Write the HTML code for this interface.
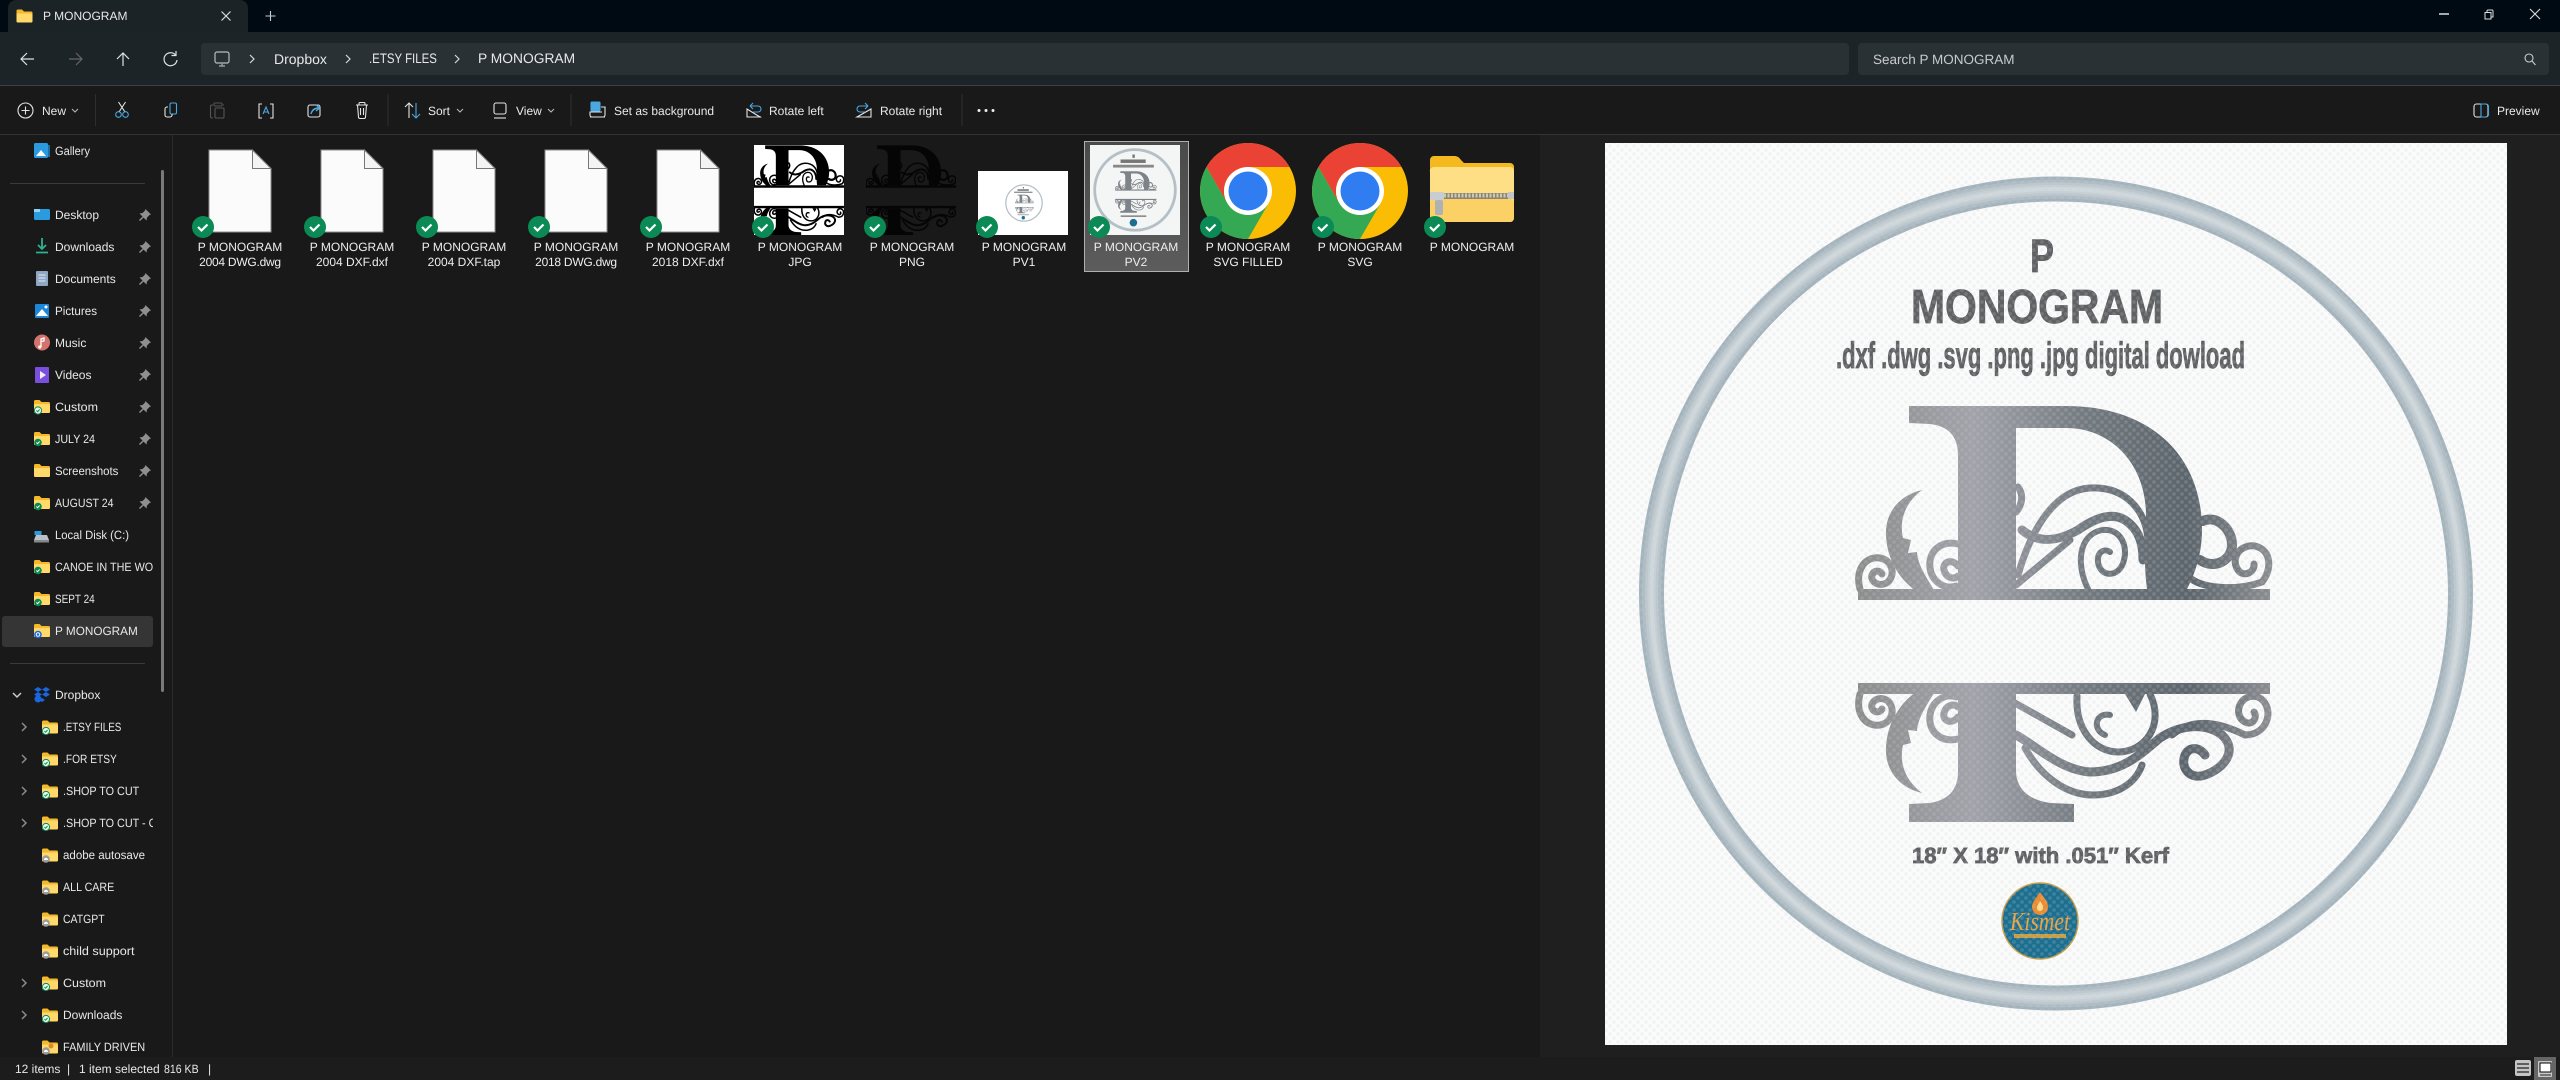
<!DOCTYPE html>
<html><head><meta charset="utf-8"><title>P MONOGRAM</title>
<style>
html,body{margin:0;padding:0;width:2560px;height:1080px;overflow:hidden;background:#191919}
body{position:relative;font-family:"Liberation Sans",sans-serif;font-size:12px;color:#e8e8e8;text-rendering:geometricPrecision}
.b{position:absolute}
.t{position:absolute;line-height:16px;height:16px;white-space:nowrap;overflow:hidden;width:98px;transform-origin:0 50%}
.s{left:55px}.c{left:63px;width:90px}
.tb{position:absolute;top:103px;line-height:16px;white-space:nowrap}
.l{position:absolute;top:239.500px;width:110px;text-align:center;line-height:15.3px;color:#eee}
.n{letter-spacing:-.25px}
svg{position:absolute;left:0;top:0}
</style></head><body>
<div class="b" style="left:0;top:0;width:2560px;height:32px;background:#000a12"></div>
<div class="b" style="left:8px;top:0;width:240px;height:32px;background:#1c2327;border-radius:8px 8px 0 0"></div>
<div class="b" style="left:0;top:32px;width:2560px;height:53px;background:#1d2428"></div>
<div class="b" style="left:0;top:85px;width:2560px;height:1px;background:#3c3f41"></div>
<div class="b" style="left:201px;top:43px;width:1648px;height:32px;background:#2a3135;border-radius:4px"></div>
<div class="b" style="left:1858px;top:43px;width:691px;height:32px;background:#2a3135;border-radius:4px"></div>
<div class="b" style="left:0;top:134px;width:2560px;height:1px;background:#333"></div>
<div class="b" style="left:1540px;top:135px;width:1020px;height:922px;background:#1f1f1f"></div>
<div class="b" style="left:172px;top:135px;width:1px;height:922px;background:#2b2b2b"></div>
<div class="b" style="left:161px;top:170px;width:3px;height:522px;background:#7a7a7a;border-radius:2px"></div>
<div class="b" style="left:10px;top:183px;width:135px;height:1px;background:#3a3a3a"></div>
<div class="b" style="left:10px;top:663px;width:135px;height:1px;background:#3a3a3a"></div>
<div class="b" style="left:2px;top:616px;width:151px;height:31px;background:#353535;border-radius:3px"></div>
<div class="b" style="left:1084px;top:141px;width:103px;height:129px;background:linear-gradient(#4a4a4a,#5c5c5c);border:1px solid #b0b0b0"></div>
<div class="b" style="left:0;top:1057px;width:2560px;height:23px;background:#1c1c1c"></div>
<div class="b" style="left:1605px;top:143px;width:902px;height:902px;background:#fbfbfb"></div>
<div class="b" style="left:754px;top:145px;width:90px;height:90px;background:#fff"></div>
<div class="b" style="left:978px;top:171px;width:90px;height:64px;background:#fff"></div>
<div class="b" style="left:1090px;top:145px;width:90px;height:90px;background:#f4f5f5"></div>

<svg width="2560" height="1080" viewBox="0 0 2560 1080" xmlns="http://www.w3.org/2000/svg">
<defs>
<linearGradient id="g" gradientUnits="userSpaceOnUse" x1="1858" y1="0" x2="2270" y2="0">
<stop offset="0" stop-color="#8d8d8d"/><stop offset=".28" stop-color="#a2a3aa"/><stop offset=".55" stop-color="#737a80"/><stop offset=".8" stop-color="#5c656c"/><stop offset="1" stop-color="#8a8d90"/></linearGradient>
<pattern id="dots" width="8" height="8" patternUnits="userSpaceOnUse"><circle cx="2" cy="2" r="1.9" fill="#c6cbd0" fill-opacity=".2"/><circle cx="6" cy="6" r="1.9" fill="#c6cbd0" fill-opacity=".2"/></pattern>
<g id="ol">
<path stroke="none" d="M1922 490C1900 495 1885 512 1886 535C1887 560 1900 582 1922 595L1934 590C1925 575 1918 565 1917 552L1908 553L1911 540L1903 538C1899 520 1905 503 1922 490Z"/>
<g fill="none" stroke-width="7" stroke-linecap="round">
<path d="M1860 589C1855 570 1865 556 1880 558C1892 560 1896 574 1888 582C1880 588 1870 582 1872 575C1874 570 1880 570 1882 574"/>
<path d="M1958 544C1940 540 1928 552 1930 568C1932 582 1945 590 1956 586M1958 566C1952 558 1942 562 1944 570C1946 578 1954 580 1958 576"/>
</g></g>
<g id="mono">
<path stroke="none" d="M1909 406H2066C2150 406 2202 455 2202 530C2202 552 2196 572 2187 589H2147C2143 560 2146 535 2146 515C2146 465 2112 428 2066 428H2016V589H1958V455C1958 436 1948 426 1930 424L1909 423Z"/>
<path stroke="none" d="M1858 589H2270V600H1858ZM1858 683H2270V694H1858Z"/>
<path stroke="none" d="M1958 694H2016V770C2016 790 2030 800 2050 803L2074 804V822H1909V804L1930 803C1948 800 1958 790 1958 772Z"/>
<use href="#ol"/><use href="#ol" transform="matrix(1 0 0 -1 0 1283)"/>
<g fill="none" stroke-width="7" stroke-linecap="round">
<path d="M2018 487C2024 495 2022 505 2016 512"/>
<path d="M2018 575C2028 540 2050 490 2090 488C2125 486 2146 510 2148 540"/>
<path stroke-width="9" d="M2022 530C2040 545 2060 540 2078 530C2095 518 2112 512 2125 520C2140 530 2143 545 2143 560"/>
<path d="M2016 585L2070 540"/>
<path stroke-width="6" d="M2088 589C2076 565 2078 535 2102 530C2120 528 2128 545 2124 560C2120 578 2100 578 2098 562C2097 552 2104 548 2110 552"/>
<path stroke-width="10" d="M2203 521C2216 515 2232 528 2232 545C2232 560 2215 570 2200 560"/>
<path d="M2190 578C2205 590 2240 590 2262 582C2272 570 2272 550 2255 546C2240 544 2230 558 2238 570C2244 578 2255 572 2254 564"/>
<path stroke-width="9" d="M2016 735C2035 745 2060 770 2090 772C2125 772 2145 750 2160 738C2180 725 2205 722 2222 735C2238 750 2225 768 2205 775C2190 780 2180 768 2185 755C2190 745 2200 748 2205 755"/>
<path d="M2015 703L2072 735"/>
<path d="M2025 748C2040 775 2065 795 2093 795C2115 795 2135 785 2142 765"/>
<path d="M2077 696C2075 730 2095 752 2118 752C2145 752 2165 725 2150 694"/>
<path stroke-width="6" d="M2110 715C2095 712 2092 730 2105 735"/>
<path d="M2172 735C2195 715 2225 725 2245 735C2270 735 2275 705 2258 697C2240 692 2232 715 2245 722C2252 726 2258 718 2254 712"/>
</g>
<path stroke="none" d="M2125 694H2145L2136 712Z"/>
</g>
<g id="pv">
<circle cx="2056" cy="593.5" r="404" fill="none" stroke="#b5c0c6" stroke-width="28"/>
<use href="#mono" fill="#7d8388" stroke="#7d8388"/>
<rect x="2030" y="238" width="24" height="34" fill="#777"/>
<rect x="1911" y="288" width="252" height="35" fill="#777"/>
<rect x="1836" y="341" width="409" height="28" fill="#888"/>
<rect x="1912" y="848" width="257" height="16" fill="#888"/>
<circle cx="2040" cy="921" r="38" fill="#1e6f8f"/>
</g>
<g id="file"><path d="M209 150H252.5L271 168.5V232H209Z" fill="#fbfbfb" stroke="#8d8d8d" stroke-width="1"/><path d="M252.5 150V168.5H271Z" fill="#f4f4f4" stroke="#777" stroke-width="1"/></g>
<g id="chk"><circle r="11" fill="#0b8a55"/><path d="M-5 0l3.5 3.5 6-6" fill="none" stroke="#fff" stroke-width="2.2"/></g>
<g id="chrome"><circle r="48" fill="#fbbc04"/>
<path d="M0-48A48 48 0 0 1 41.57-24H0A24 24 0 0 0-20.8 12L-41.57-24A48 48 0 0 1 0-48Z" fill="#ea4335"/>
<path d="M-41.57-24L-20.8 12A24 24 0 0 0 20.8 12L0 48A48 48 0 0 1-41.57-24Z" fill="#34a853"/>
<circle r="24" fill="#fff"/><circle r="19.5" fill="#2f7df0"/><circle r="21.5" fill="none" stroke="#fff" stroke-width="1"/></g>
<g id="fo"><path d="M0 2A1.5 1.5 0 0 1 1.5 .5H5.5L7.5 2.5H14.5A1.5 1.5 0 0 1 16 4V12A1.5 1.5 0 0 1 14.5 13.5H1.5A1.5 1.5 0 0 1 0 12Z" fill="#f5b82b"/><path d="M0 4.5H14.5A1.5 1.5 0 0 1 16 6V12A1.5 1.5 0 0 1 14.5 13.5H1.5A1.5 1.5 0 0 1 0 12Z" fill="#ffd969"/></g>
<g id="bg"><circle cx="4" cy="11" r="3.8" fill="#0c8a50"/><path d="M2.4 11l1.2 1.2 2-2.2" stroke="#fff" fill="none" stroke-width="1"/></g>
<g id="bw"><circle cx="4" cy="11" r="3.6" fill="#e8f5ee" stroke="#0c8a50"/><path d="M2.4 11l1.2 1.2 2-2.2" stroke="#0c8a50" fill="none" stroke-width="1"/></g>
<g id="bs"><circle cx="4" cy="11" r="3.8" fill="#9a9a9a"/><path d="M1.8 12a2.2 2.2 0 0 1 4.4 0Z" fill="#fff"/></g>
<g id="bb"><circle cx="4" cy="11" r="3.8" fill="#1a66e0"/><circle cx="4" cy="11" r="1.8" fill="none" stroke="#fff"/></g>
<g id="pin"><path d="M6.5 0L12 5.5 10.5 6 8 8.5 7.5 11.5 4.5 8.5 1 12 0 11 3.5 7.5 .5 4.5 3.5 4 6 1.5Z" fill="#8f8f8f"/></g>
<path id="chev" d="M0 0l4 4-4 4" fill="none" stroke="#8a8a8a" stroke-width="1.5"/>
<path id="dn" d="M0 0l3 3 3-3" fill="none" stroke="#bbb" stroke-width="1"/>
<path id="bc" d="M0 0l4 4-4 4" fill="none" stroke="#d8d8d8" stroke-width="1.2"/>
<clipPath id="c1"><rect x="754" y="145" width="90" height="90"/></clipPath>
<clipPath id="c2"><rect x="866" y="145" width="90" height="90"/></clipPath>
</defs>

<!-- title bar -->
<g transform="translate(16.5 9)"><use href="#fo"/></g>
<path d="M221.5 11.5l9 9m0-9l-9 9" stroke="#ddd" stroke-width="1.2" fill="none"/>
<path d="M270.5 11v10M265.5 16h10" stroke="#ccc" stroke-width="1.1" fill="none"/>
<path d="M2439 14h10" stroke="#eee" stroke-width="1.4"/>
<path d="M2485 12.500h6v6.500h-6zM2487 12.500v-1.500a1 1 0 0 1 1-1h4a1 1 0 0 1 1 1v6h-2" stroke="#ddd" fill="none"/>
<path d="M2530 9l10 10m0-10l-10 10" stroke="#ddd" stroke-width="1.1" fill="none"/>

<!-- nav -->
<g fill="none" stroke="#e0e0e0" stroke-width="1.2">
<path d="M21 59h13M27 53l-6 6 6 6"/>
<path d="M69 59h13M76 53l6 6-6 6" stroke="#666"/>
<path d="M123 66V53M117 59l6-6 6 6"/>
<path d="M175.500 55a6.500 6.500 0 1 0 1.500 5M176 51v4.500h-4.500"/>
<rect x="215" y="52" width="14" height="11" rx="2" stroke="#bbb"/><path d="M219 66h6M222 63v3" stroke="#999" stroke-width="1.5"/>
</g>
<use href="#bc" x="250" y="55"/><use href="#bc" x="346" y="55"/><use href="#bc" x="455" y="55"/>
<g fill="none" stroke="#ccc" stroke-width="1.1"><circle cx="2529" cy="58" r="4"/><path d="M2532 61l3.500 4"/></g>

<!-- toolbar -->
<g fill="none" stroke="#e4e4e4" stroke-width="1.1">
<circle cx="25.500" cy="110.500" r="7.500"/><path d="M25.500 106.500v8M21.500 110.500h8"/>
<path d="M125.500 102l-6.500 10M118.500 102l6.500 10"/><circle cx="118.500" cy="114.500" r="2.800" stroke="#4aa8e0"/><circle cx="125.500" cy="114.500" r="2.800" stroke="#4aa8e0"/>
<rect x="170" y="103" width="6.500" height="11" rx="1.500" stroke="#4aa8e0"/><path d="M168 107h-1a2 2 0 0 0-2 2v6a2 2 0 0 0 2 2h3a2 2 0 0 0 2-2v-1"/>
<g stroke="#555"><path d="M213 105h-1a1.500 1.500 0 0 0-1.500 1.500v10a1.500 1.500 0 0 0 1.500 1.500h1M223 105h1"/><rect x="215" y="108" width="9" height="10" rx="1"/><rect x="214" y="103" width="8" height="3" rx="1"/></g>
<path d="M262 104h-3v14h3M270 104h3v14h-3"/><path d="M263 114l3-7 3 7M264 112h4" stroke="#4aa8e0"/>
<rect x="308" y="105" width="12" height="12" rx="2"/><path d="M311 114c1-4 4-6 8-6M316 105l3.500 3-3.500 3" stroke="#4aa8e0" stroke-width="1.400"/>
<path d="M356 105h12M359 105v-1.500a1 1 0 0 1 1-1h4a1 1 0 0 1 1 1v1.500M357.500 105l1 12a1.500 1.500 0 0 0 1.500 1.500h4a1.500 1.500 0 0 0 1.500-1.500l1-12M360.500 108v7M363.500 108v7"/>
<path d="M409 118v-15M405 107l4-4 4 4"/><path d="M416 103v15M412 114l4 4 4-4" stroke="#4aa8e0"/>
<rect x="494" y="103" width="12" height="11" rx="2"/><path d="M494 118h12"/>
<rect x="591" y="102" width="9" height="9" rx="1" fill="#4aa8e0" stroke="#4aa8e0"/><path d="M601 107h4v8a2 2 0 0 1-2 2h-11a2 2 0 0 1-2-2v-3h12M590 117h15"/>
<path d="M747 117h13l-13-8zM760 117v-1"/><path d="M750 106l3-3M750 106l3 3M750 106h8a3 3 0 0 1 0 6h-5" stroke="#4aa8e0"/>
<path d="M871 117h-14l14-8z"/><path d="M868 106l-3-3M868 106l-3 3M868 106h-8a3 3 0 0 0 0 6h5" stroke="#4aa8e0"/>
<rect x="2474" y="104" width="14" height="13" rx="2.500"/><path d="M2481 104h5a2.500 2.500 0 0 1 2.500 2.500v8a2.500 2.500 0 0 1-2.500 2.500h-5z" stroke="#4aa8e0"/>
</g>
<use href="#dn" x="72" y="109"/><use href="#dn" x="457" y="109"/><use href="#dn" x="548" y="109"/>
<path d="M95.500 94v32M388 94v32M571 94v32M962 94v32" stroke="#2e2e2e"/>
<g fill="#eee"><circle cx="979" cy="110.500" r="1.500"/><circle cx="986" cy="110.500" r="1.500"/><circle cx="993" cy="110.500" r="1.500"/></g>

<!-- sidebar icons -->
<g>
<rect x="34" y="143" width="14" height="15" rx="1.500" fill="#2b9bdf"/><rect x="48" y="145" width="2" height="12" fill="#1a6fa8"/><path d="M36 156l5-6 5 6z" fill="#fff"/>
<rect x="34" y="209" width="16" height="11" rx="1.500" fill="#2b9bdf"/><rect x="34" y="209" width="6" height="3" fill="#8fd3f5"/>
<path d="M42 238v11M38 245l4 4 4-4M36 252.500h12" stroke="#2fb08e" stroke-width="1.800" fill="none"/>
<rect x="36" y="271" width="12" height="15" rx="1" fill="#8fa6c4"/><path d="M38.500 275h7M38.500 278h7M38.500 281h7" stroke="#e6edf6"/>
<rect x="35" y="304" width="14" height="14" rx="1" fill="#1c86d8"/><path d="M36 316l6-7 6 7z" fill="#fff"/><circle cx="46" cy="307" r="1.500" fill="#fff"/>
<circle cx="42" cy="342.500" r="8" fill="#d4736b"/><path d="M41 347v-8l3-1v3l-3 .5" stroke="#fff" fill="none" stroke-width="1.300"/><circle cx="39.800" cy="347" r="1.600" fill="#fff"/>
<rect x="35" y="367" width="14" height="16" rx="1" fill="#7a4fe0"/><path d="M40 371l6 4-6 4z" fill="#eee"/>
<rect x="34.500" y="531" width="7" height="4" fill="#2b9bdf"/><path d="M36 535l11 0 2 5H34z" fill="#b9c2c8"/><rect x="34" y="540" width="15" height="2.500" fill="#888"/>
<path d="M38 687l4 2.500-4 2.500-4-2.500zM46 687l4 2.500-4 2.500-4-2.500zM38 692l4 2.500-4 2.500-4-2.500zM46 692l4 2.500-4 2.500-4-2.500zM42 698l3 2-3 2-3-2z" fill="#1a66e0"/><circle cx="38" cy="699" r="3.500" fill="#1a66e0"/>
</g>
<g transform="translate(34 399.500)"><use href="#fo"/><use href="#bw"/></g>
<g transform="translate(34 431.500)"><use href="#fo"/><use href="#bg"/></g>
<g transform="translate(34 463.500)"><use href="#fo"/></g>
<g transform="translate(34 495.500)"><use href="#fo"/><use href="#bg"/></g>
<g transform="translate(34 559.500)"><use href="#fo"/><use href="#bg"/></g>
<g transform="translate(34 591.500)"><use href="#fo"/><use href="#bg"/></g>
<g transform="translate(34 623.500)"><use href="#fo"/><use href="#bb"/></g>
<g transform="translate(42 720)"><use href="#fo"/><use href="#bw"/></g>
<g transform="translate(42 752)"><use href="#fo"/><use href="#bw"/></g>
<g transform="translate(42 784)"><use href="#fo"/><use href="#bw"/></g>
<g transform="translate(42 816)"><use href="#fo"/><use href="#bw"/></g>
<g transform="translate(42 848)"><use href="#fo"/><use href="#bs"/></g>
<g transform="translate(42 880)"><use href="#fo"/><use href="#bs"/></g>
<g transform="translate(42 912)"><use href="#fo"/><use href="#bs"/></g>
<g transform="translate(42 944)"><use href="#fo"/><use href="#bs"/></g>
<g transform="translate(42 976)"><use href="#fo"/><use href="#bw"/></g>
<g transform="translate(42 1008)"><use href="#fo"/><use href="#bw"/></g>
<g transform="translate(42 1040)"><use href="#fo"/><use href="#bs"/><circle cx="9" cy="6" r="2.500" fill="#d98a2b"/></g>
<use href="#pin" x="139" y="209"/><use href="#pin" x="139" y="241"/><use href="#pin" x="139" y="273"/><use href="#pin" x="139" y="305"/><use href="#pin" x="139" y="337"/><use href="#pin" x="139" y="369"/><use href="#pin" x="139" y="401"/><use href="#pin" x="139" y="433"/><use href="#pin" x="139" y="465"/><use href="#pin" x="139" y="497"/>
<path d="M13 693l4 4 4-4" fill="none" stroke="#ccc" stroke-width="1.500"/>
<use href="#chev" x="22" y="723"/><use href="#chev" x="22" y="755"/><use href="#chev" x="22" y="787"/><use href="#chev" x="22" y="819"/><use href="#chev" x="22" y="979"/><use href="#chev" x="22" y="1011"/>

<!-- files -->
<use href="#file"/><use href="#file" x="112"/><use href="#file" x="224"/><use href="#file" x="336"/><use href="#file" x="448"/>
<g clip-path="url(#c1)"><use href="#mono" fill="#000" stroke="#000" transform="translate(754 186.500) scale(.2184) translate(-1858 -594.500)"/></g>
<g clip-path="url(#c2)"><use href="#mono" fill="#050505" stroke="#050505" transform="translate(866 186.500) scale(.2184) translate(-1858 -594.500)"/></g>
<use href="#pv" transform="translate(1024 203) scale(.045) translate(-2056 -593.500)"/>
<use href="#pv" transform="translate(1090 145) scale(.0998) translate(-1605 -143)"/>
<use href="#chrome" x="1248" y="191"/><use href="#chrome" x="1360" y="191"/>
<path d="M1430 160a4 4 0 0 1 4-4h20c3 0 5 1 7 4l3 3h46a4 4 0 0 1 4 4v10h-84z" fill="#f4b91f"/>
<path d="M1430 172a4 4 0 0 1 4-5h76a4 4 0 0 1 4 4v47a4 4 0 0 1-4 4h-76a4 4 0 0 1-4-4z" fill="#ffdf85"/>
<rect x="1430" y="199" width="84" height="23" rx="4" fill="#fbd064"/>
<rect x="1444" y="193" width="65" height="6" fill="#8a8470"/>
<path d="M1444 195.500h65" stroke="#cfcab8" stroke-dasharray="2 1.500" stroke-width="4"/>
<rect x="1430" y="192" width="14" height="8" rx="1.500" fill="#c9cdd0"/><rect x="1508" y="192" width="6" height="7" fill="#c2c5c6"/>
<rect x="1435" y="200" width="8" height="15" rx="2" fill="#aeb2b5"/>
<use href="#chk" x="203" y="227"/><use href="#chk" x="315" y="227"/><use href="#chk" x="427" y="227"/><use href="#chk" x="539" y="227"/><use href="#chk" x="651" y="227"/><use href="#chk" x="763" y="227"/><use href="#chk" x="875" y="227"/><use href="#chk" x="987" y="227"/><use href="#chk" x="1099" y="227"/><use href="#chk" x="1211" y="227"/><use href="#chk" x="1323" y="227"/><use href="#chk" x="1435" y="227"/>

<!-- preview image -->
<g fill="none">
<circle cx="2056" cy="593.500" r="404.500" stroke="#a3b3bc" stroke-width="25"/>
<circle cx="2056" cy="593.500" r="404.500" stroke="#afbcc4" stroke-width="19"/>
<circle cx="2056" cy="593.500" r="404.500" stroke="#bcc8ce" stroke-width="13"/>
<circle cx="2056" cy="593.500" r="404.500" stroke="#c6d0d5" stroke-width="8"/>
<circle cx="2056" cy="593.500" r="404.500" stroke="#cfd8dc" stroke-width="4"/>
</g>
<use href="#mono" fill="url(#g)" stroke="url(#g)"/>
<g font-family="Liberation Sans" font-weight="700" fill="#5f6163" stroke="#5f6163" stroke-width=".8">
<text x="2030" y="272" font-size="47" textLength="24" lengthAdjust="spacingAndGlyphs">P</text>
<text x="1911" y="323" font-size="48" textLength="252" lengthAdjust="spacingAndGlyphs">MONOGRAM</text>
<text x="1836" y="368" font-size="37" textLength="409" lengthAdjust="spacingAndGlyphs">.dxf .dwg .svg .png .jpg digital dowload</text>
<text x="1912" y="863" font-size="22" textLength="257" lengthAdjust="spacingAndGlyphs">18″ X 18″ with .051″ Kerf</text>
</g>
<circle cx="2040" cy="921" r="38" fill="#1d6f90" stroke="#c79c45" stroke-width="1.500"/>
<path d="M2040 892c4 6 8 9 8 15a8 8 0 0 1-16 0c0-6 5-9 8-15z" fill="#ee8a2e"/><path d="M2040 901c2 3 3 4 3 7a3 3 0 0 1-6 0c0-3 2-4 3-7z" fill="#ffe08a"/>
<text x="2010" y="930" font-family="Liberation Serif" font-style="italic" font-size="26" fill="#eda13c" textLength="60" lengthAdjust="spacingAndGlyphs">Kismet</text>
<rect x="2014" y="934" width="52" height="4" fill="#c79c45"/>
<rect x="1605" y="143" width="902" height="902" fill="url(#dots)"/>

<!-- status right -->
<rect x="2515" y="1060" width="16" height="16" rx="2" fill="#c4c4c4"/><path d="M2517 1064h12M2517 1068h12M2517 1072h12" stroke="#222" stroke-width="1.200"/>
<rect x="2534" y="1057" width="22" height="23" fill="#666"/><rect x="2538" y="1061" width="14" height="16" rx="1" fill="#c9c9c9"/><rect x="2540" y="1063" width="11" height="9" fill="#fff" stroke="#000"/><path d="M2540 1075h11" stroke="#222"/>
</svg>

<!-- title and nav text -->
<div class="t" style="left:43px;top:8px;width:170px">P MONOGRAM</div>
<div class="t" style="left:274px;top:51px;font-size:14px;width:60px">Dropbox</div>
<div class="t" style="left:369px;top:51px;font-size:13.8px;width:90px;transform:scaleX(.83)">.ETSY FILES</div>
<div class="t" style="left:478px;top:51px;font-size:13.8px;width:100px">P MONOGRAM</div>
<div class="t" style="left:1873px;top:51.500px;font-size:13.500px;width:160px;color:#c8cbcd">Search P MONOGRAM</div>

<!-- toolbar text -->
<div class="tb" style="left:42px">New</div>
<div class="tb" style="left:428px">Sort</div>
<div class="tb" style="left:516px">View</div>
<div class="tb" style="left:614px">Set as background</div>
<div class="tb" style="left:769px">Rotate left</div>
<div class="tb" style="left:880px">Rotate right</div>
<div class="tb" style="left:2497px">Preview</div>

<!-- sidebar text -->
<div class="t s" style="top:143px;transform:scaleX(.92)">Gallery</div>
<div class="t s" style="top:206.500px;width:75px">Desktop</div>
<div class="t s" style="top:238.500px;width:75px">Downloads</div>
<div class="t s" style="top:270.500px;width:75px">Documents</div>
<div class="t s" style="top:302.500px;width:75px;transform:scaleX(.97)">Pictures</div>
<div class="t s" style="top:334.500px;width:75px">Music</div>
<div class="t s" style="top:366.500px;width:75px">Videos</div>
<div class="t s" style="top:398.500px;width:75px;transform:scaleX(1.04)">Custom</div>
<div class="t s" style="top:430.500px;width:75px;transform:scaleX(.89)">JULY 24</div>
<div class="t s" style="top:462.500px;width:75px;transform:scaleX(.95)">Screenshots</div>
<div class="t s" style="top:494.500px;width:75px;transform:scaleX(.88)">AUGUST 24</div>
<div class="t s" style="top:526.500px;transform:scaleX(.94)">Local Disk (C:)</div>
<div class="t s" style="top:558.500px;width:109px;transform:scaleX(.9)">CANOE IN THE WOODS</div>
<div class="t s" style="top:590.500px;transform:scaleX(.83)">SEPT 24</div>
<div class="t s" style="top:622.500px;transform:scaleX(.98)">P MONOGRAM</div>
<div class="t s" style="top:687px">Dropbox</div>
<div class="t c" style="top:719px;transform:scaleX(.82)">.ETSY FILES</div>
<div class="t c" style="top:751px;transform:scaleX(.85)">.FOR ETSY</div>
<div class="t c" style="top:783px;transform:scaleX(.9)">.SHOP TO CUT</div>
<div class="t c" style="top:815px;width:100px;transform:scaleX(.9)">.SHOP TO CUT - COPY</div>
<div class="t c" style="top:847px;transform:scaleX(.96)">adobe autosave</div>
<div class="t c" style="top:879px;transform:scaleX(.89)">ALL CARE</div>
<div class="t c" style="top:911px;transform:scaleX(.87)">CATGPT</div>
<div class="t c" style="top:943px;transform:scaleX(1.05)">child support</div>
<div class="t c" style="top:975px;transform:scaleX(1.04)">Custom</div>
<div class="t c" style="top:1007px">Downloads</div>
<div class="t c" style="top:1039px;transform:scaleX(.91)">FAMILY DRIVEN</div>

<!-- file labels -->
<div class="l" style="left:185px">P MONOGRAM<br><span class="n">2004 DWG.dwg</span></div>
<div class="l" style="left:297px">P MONOGRAM<br>2004 DXF.dxf</div>
<div class="l" style="left:409px">P MONOGRAM<br>2004 DXF.tap</div>
<div class="l" style="left:521px">P MONOGRAM<br><span class="n">2018 DWG.dwg</span></div>
<div class="l" style="left:633px">P MONOGRAM<br>2018 DXF.dxf</div>
<div class="l" style="left:745px">P MONOGRAM<br>JPG</div>
<div class="l" style="left:857px">P MONOGRAM<br>PNG</div>
<div class="l" style="left:969px">P MONOGRAM<br>PV1</div>
<div class="l" style="left:1081px">P MONOGRAM<br>PV2</div>
<div class="l" style="left:1193px">P MONOGRAM<br>SVG FILLED</div>
<div class="l" style="left:1305px">P MONOGRAM<br>SVG</div>
<div class="l" style="left:1417px">P MONOGRAM</div>

<!-- status -->
<div class="t" style="left:15px;top:1061px;width:50px">12 items</div>
<div class="t" style="left:67px;top:1061px;width:6px">|</div>
<div class="t" style="left:79px;top:1061px;width:84px">1 item selected</div>
<div class="t" style="left:164px;top:1061px;width:44px;transform:scaleX(.88)">816 KB</div>
<div class="t" style="left:208px;top:1061px;width:6px">|</div>
</body></html>
